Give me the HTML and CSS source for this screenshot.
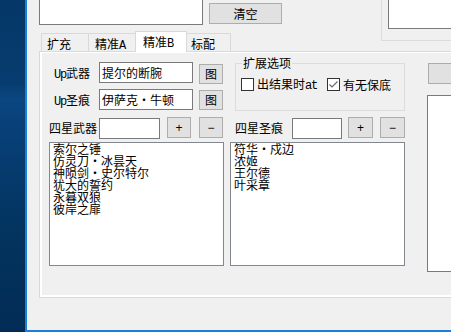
FILE: index.html
```html
<!DOCTYPE html>
<html lang="zh">
<head>
<meta charset="utf-8">
<title>抽卡模拟</title>
<link rel="stylesheet" href="styles.css">
</head>
<body>
<div class="screen">
  <div class="desktop"></div>
  <div class="window">
    <div class="top">
      <div class="top-left">
        <div class="top-row">
          <div class="box big-box"></div>
          <button class="btn clear-btn">清空</button>
        </div>
        <div class="tabs">
          <div class="tab t1">扩充</div>
          <div class="tab t2">精准<span class="lat">A</span></div>
          <div class="tab sel">精准<span class="lat">B</span></div>
          <div class="tab t4">标配</div>
        </div>
      </div>
      <div class="top-group"><div class="box top-right-box"></div></div>
    </div>

    <div class="panel">
      <div class="main">
        <div class="row-a">
          <div class="ups">
            <div class="up-row">
              <span class="up-lbl"><span class="lat">Up</span>武器</span>
              <div class="box field up-field">提尔的断腕</div>
              <button class="btn pic pic1">图</button>
            </div>
            <div class="up-row up-row2">
              <span class="up-lbl"><span class="lat">Up</span>圣痕</span>
              <div class="box field up-field">伊萨克・牛顿</div>
              <button class="btn pic pic2">图</button>
            </div>
          </div>
          <div class="group">
            <div class="group-title">扩展选项</div>
            <div class="checks">
              <svg class="cb" width="13" height="13" viewBox="0 0 13 13"><rect x="0.5" y="0.5" width="12" height="12" fill="#fff" stroke="#333"/></svg>
              <span class="cb-lbl">出结果时<span class="lat">at</span></span>
              <svg class="cb cb2" width="13" height="13" viewBox="0 0 13 13"><rect x="0.5" y="0.5" width="12" height="12" fill="#fff" stroke="#333"/><polyline points="2.5,6.5 5,9 10.5,3.5" fill="none" stroke="#6a6a6a" stroke-width="1.2"/></svg>
              <span class="cb-lbl">有无保底</span>
            </div>
          </div>
        </div>

        <div class="row-b">
          <span class="lbl4">四星武器</span>
          <div class="box field f4a"></div>
          <button class="btn pm plus1">+</button>
          <button class="btn pm minus1">−</button>
          <span class="lbl4 lbl4b">四星圣痕</span>
          <div class="box field f4b"></div>
          <button class="btn pm plus2">+</button>
          <button class="btn pm minus2">−</button>
        </div>

        <div class="row-c">
          <div class="list">
            <div>索尔之锤</div>
            <div>仿灵刀・冰昙天</div>
            <div>神陨剑・史尔特尔</div>
            <div>犹大的誓约</div>
            <div>永暮双狼</div>
            <div>彼岸之扉</div>
          </div>
          <div class="list list2">
            <div>符华・戍边</div>
            <div>浓姬</div>
            <div>王尔德</div>
            <div>叶采章</div>
          </div>
        </div>
      </div>

      <div class="side">
        <button class="btn side-btn"></button>
        <div class="box side-box"></div>
      </div>
    </div>
  </div>
</div>
</body>
</html>
```

FILE: styles.css
```css
* { box-sizing: border-box; }

body {
  margin: 0;
  font-family: "Noto Sans CJK SC", "Noto Sans", sans-serif;
  font-size: 12px;
  color: #000;
}

.lat {
  font-family: "Liberation Mono", monospace;
  font-size: 12px;
  letter-spacing: -1.2px;
}

.screen {
  display: flex;
  width: 451px;
  height: 332px;
  overflow: hidden;
}

.desktop {
  flex: none;
  width: 25px;
  background: linear-gradient(#053868 0%, #073c70 25%, #0b4681 30%, #073f77 40%, #03345f 70%, #022c55 100%);
}

.window {
  flex: 1;
  min-width: 0;
  height: 332px;
  background: #f0f0f0;
  border-left: 2px solid #1a7fd6;
  border-bottom: 2px solid #1a7fd6;
  overflow: hidden;
}

.box {
  background: #fff;
  border: 1px solid #7a7a7a;
}

.btn {
  font: inherit;
  color: #000;
  background: #e1e1e1;
  border: 1px solid #adadad;
  padding: 0;
  margin: 0;
  line-height: 1;
}

/* top area */
.top {
  display: flex;
  height: 51px;
}

.top-left {
  flex: 0 0 354px;
}

.top-row {
  display: flex;
  align-items: flex-start;
  height: 25px;
}

.big-box {
  width: 164px;
  height: 40px;
  margin-top: -15px;
  margin-left: 12px;
}

.clear-btn {
  width: 73px;
  height: 21px;
  margin-top: 3px;
  margin-left: 6px;
}

.tabs {
  display: flex;
  align-items: flex-end;
  height: 20px;
  margin-top: 6px;
  margin-left: 14px;
}

.tab {
  height: 18px;
  border: 1px solid #d9d9d9;
  border-bottom: none;
  background: #f0f0f0;
  line-height: 18px;
  padding-top: 1px;
  white-space: nowrap;
}

.t1 { width: 48px; padding-left: 5px; }
.t2 { width: 48px; margin-left: -1px; padding-left: 6px; }
.sel {
  position: relative;
  z-index: 1;
  width: 52px;
  height: 21px;
  margin-left: -1px;
  margin-bottom: -1px;
  padding-left: 7px;
  padding-top: 0;
  line-height: 19px;
  background: #fff;
}
.t4 { width: 45px; margin-left: -1px; padding-left: 4px; }

.top-group {
  flex: 0 0 80px;
  align-self: flex-start;
  height: 51px;
  margin-top: -10px;
  border: 1px solid #dcdcdc;
  padding: 0 0 11px 6px;
  display: flex;
  align-items: flex-end;
}

.top-right-box {
  width: 70px;
  height: 36px;
}

/* tab page */
.panel {
  display: flex;
  width: 440px;
  height: 247px;
  margin-left: 12px;
  padding: 10px 0 0 9px;
  border: 1px solid #d9d9d9;
  background: #f0f0f0;
  box-shadow: inset 2px 0 0 #fff, inset 0 -2px 0 #fff, inset 0 1px 0 #fff;
}

.main {
  flex: none;
  width: 356px;
  display: flex;
  flex-direction: column;
}

.row-a {
  display: flex;
  height: 48px;
}

.ups {
  width: 174px;
  display: flex;
  flex-direction: column;
}

.up-row {
  display: flex;
  align-items: flex-start;
  height: 22px;
}

.up-row2 {
  height: 21px;
  margin-top: 5px;
}

.up-lbl {
  width: 50px;
  padding-left: 5px;
  line-height: 21px;
  white-space: nowrap;
}

.field {
  height: 21px;
  line-height: 19px;
  padding-left: 2px;
  white-space: nowrap;
  overflow: hidden;
}

.up-field {
  width: 94px;
}

.pic {
  width: 24px;
  height: 20px;
  margin-left: 6px;
}
.pic1 { margin-top: 2px; }
.pic2 { margin-top: 1px; }

.group {
  width: 170px;
  height: 48px;
  margin-top: 1px;
  margin-left: 12px;
  border: 1px solid #dcdcdc;
  padding-left: 5px;
}

.group-title {
  width: fit-content;
  margin-top: -8px;
  margin-left: 1px;
  padding: 0 1px;
  line-height: 14px;
  background: #f0f0f0;
}

.checks {
  display: flex;
  align-items: center;
  height: 13px;
  margin-top: 8px;
  line-height: 13px;
  white-space: nowrap;
}

.cb { flex: none; display: block; }
.cb-lbl { margin-left: 3px; }
.cb2 { margin-left: 10px; }

.row-b {
  display: flex;
  align-items: flex-start;
  height: 21px;
  margin-top: 7px;
}

.lbl4 {
  width: 48px;
  line-height: 21px;
  white-space: nowrap;
}

.f4a { width: 61px; margin-left: 2px; margin-top: 1px; }
.pm { height: 21px; font-family: "Liberation Sans", sans-serif; font-size: 12px; }
.plus1 { width: 24px; margin-left: 7px; }
.minus1 { width: 24px; margin-left: 8px; }
.lbl4b { margin-left: 12px; }
.f4b { width: 50px; margin-left: 9px; margin-top: 1px; }
.plus2 { width: 25px; margin-left: 6px; }
.minus2 { width: 25px; margin-left: 7px; }

.row-c {
  display: flex;
  margin-top: 4px;
}

.list {
  width: 175px;
  height: 124px;
  background: #fff;
  border: 1px solid #828790;
  padding: 0 3px;
  line-height: 12px;
  white-space: nowrap;
}

.list2 {
  margin-left: 6px;
}

.side {
  flex: none;
  display: flex;
  flex-direction: column;
  margin-left: 22px;
}

.side-btn {
  width: 40px;
  height: 21px;
  margin-top: 1px;
  margin-left: 1px;
}

.side-box {
  width: 40px;
  height: 177px;
  margin-top: 11px;
}
```
